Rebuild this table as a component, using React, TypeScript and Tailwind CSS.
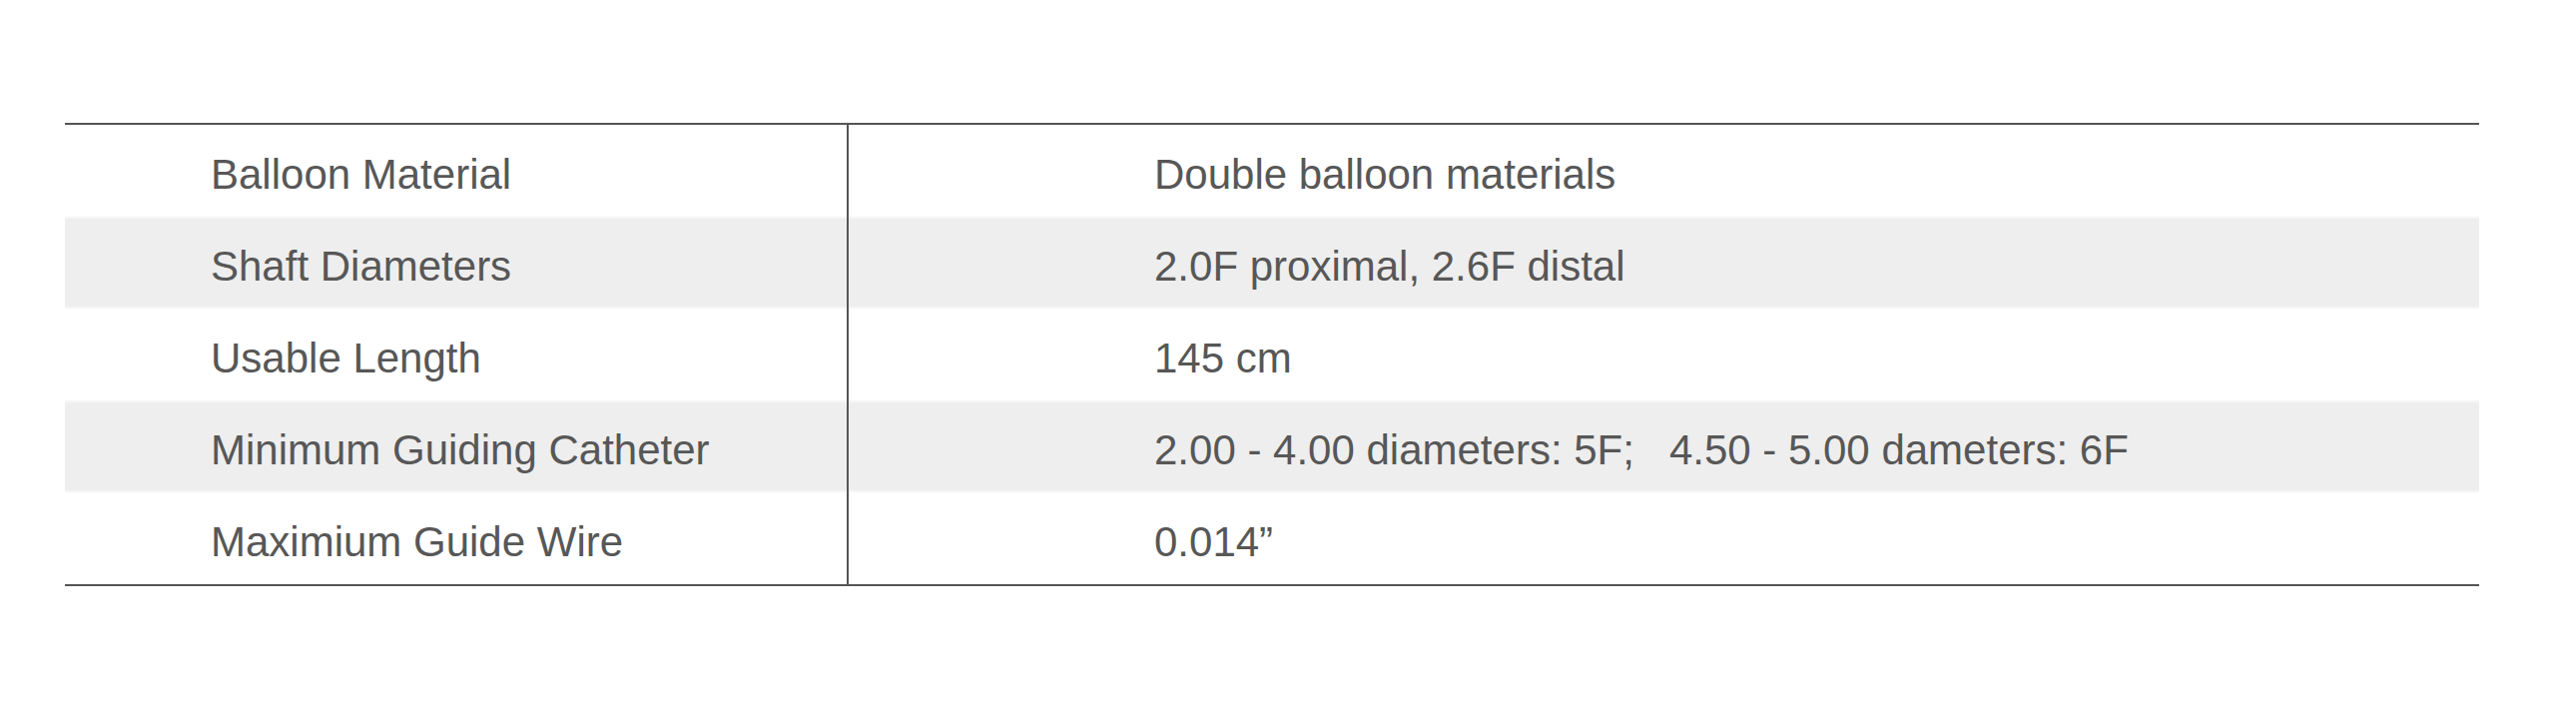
import React from "react";

const specs: [string, string][] = [
  ["Balloon Material", "Double balloon materials"],
  ["Shaft Diameters", "2.0F proximal, 2.6F distal"],
  ["Usable Length", "145 cm"],
  ["Minimum Guiding Catheter", "2.00 - 4.00 diameters: 5F;   4.50 - 5.00 dameters: 6F"],
  ["Maximium Guide Wire", "0.014\u201d"],
];

const App: React.FC = () => {
  return (
    <div
      className="w-[2580px] h-[710px] bg-white pt-[123px]"
      style={{ fontFamily: '"Liberation Sans", Arial, Helvetica, sans-serif' }}
    >
      <div className="ml-[65px] w-[2418px] border-y-2 border-[#555555]">
        {specs.map(([label, value], index) => (
          <div
            key={label}
            className={`grid grid-cols-[785px_1fr] h-[92px] text-[42px] leading-none text-[#575757] ${
              index % 2 === 1
                ? "bg-[#eeeeee] shadow-[inset_0_2px_0_#f5f5f5,inset_0_-2px_0_#f5f5f5]"
                : "bg-white"
            }`}
          >
            <div className="flex items-center pt-[7px] pl-[146px] border-r-2 border-[#555555]">
              {label}
            </div>
            <div className="flex items-center pt-[7px] pl-[306px] whitespace-pre">
              {value}
            </div>
          </div>
        ))}
      </div>
    </div>
  );
};

export default App;
